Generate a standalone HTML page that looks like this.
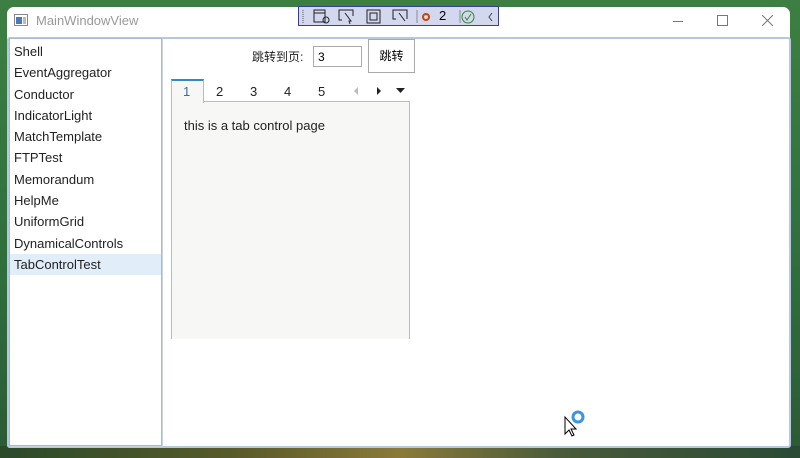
<!DOCTYPE html>
<html><head><style>
body{margin:0;width:800px;height:458px;overflow:hidden;background:linear-gradient(180deg,#3d7f42 0%,#2f6e3c 60%,#2c5a35 100%);font-family:"Liberation Sans","Noto Sans CJK SC",sans-serif;position:relative}
.bot{position:absolute;left:0;top:446px;width:800px;height:12px;background:linear-gradient(90deg,#2a4a2a,#5a5a2a 30%,#8a7a3a 50%,#4a5a3a 70%,#2a4a35)}
.win{position:absolute;left:7px;top:7px;width:783px;height:441px;background:#fff;border-radius:7px 7px 3px 3px}
.title{position:absolute;left:36px;top:13px;font-size:13px;color:#999}
.content{position:absolute;left:7px;top:37px;width:780px;height:407px;border:2px solid #b4c8e2;border-radius:3px;background:#fff}
.list{position:absolute;left:9px;top:38px;width:153px;border:1px solid #a9b9cf;box-shadow:1px 1px 0 #c8d4e4;padding-top:2px;box-sizing:border-box;height:408px}
.list div{height:21.3px;line-height:21px;font-size:13px;color:#222;padding-left:4px}
.sel{background:#e1eef9}
.tb{position:absolute;left:298px;top:6px;width:201px;height:20px;background:#d3d8ee;border:1px solid #3a3f8f;box-sizing:border-box}
.t{position:absolute;font-size:13px;color:#222}
</style></head><body>
<div class="bot"></div>
<div class="win"></div>
<svg style="position:absolute;left:14px;top:14px" width="14" height="13"><rect x="0.5" y="0.5" width="13" height="11" fill="#fff" stroke="#888"/><rect x="2" y="3" width="6" height="7" fill="#4a7abc"/><rect x="9" y="3" width="3" height="7" fill="#bbb"/></svg>
<div class="title">MainWindowView</div>
<div style="position:absolute;left:673px;top:21px;width:10px;height:1px;background:#777"></div>
<div style="position:absolute;left:717px;top:15px;width:9px;height:9px;border:1px solid #777"></div>
<svg style="position:absolute;left:762px;top:15px" width="11" height="11"><path d="M0 0L11 11M11 0L0 11" stroke="#777"/></svg>
<div class="tb">
<svg width="201" height="18" style="position:absolute;left:0;top:0" fill="none" stroke="#222">
<path d="M4 3v13" stroke="#555" stroke-dasharray="1 1"/>
<rect x="15" y="3" width="11" height="12"/><path d="M15 6h11"/><circle cx="27" cy="13" r="3"/>
<path d="M43 13h-3V3h14v6M46 6l6 8-2 0 1 3" /><rect x="68" y="3" width="13" height="13"/><rect x="71" y="6" width="7" height="7"/>
<path d="M97 12h-3V3h14v9M100 6l6 8"/><path d="M118 3v13M161 3v13" stroke="#889"/>
<circle cx="127" cy="10" r="3" stroke="#c40" stroke-width="2"/><circle cx="169" cy="10" r="6" stroke="#2a8a2a"/><path d="M166 10l2 3 4-6" stroke="#2a8a2a"/><path d="M193 6l-3 4 3 4" stroke="#444"/>
</svg>
<span style="position:absolute;left:140px;top:1px;font-size:13px">2</span>
</div>
<div class="content"></div>
<div class="list">
<div>Shell</div><div>EventAggregator</div><div>Conductor</div><div>IndicatorLight</div><div>MatchTemplate</div><div>FTPTest</div><div>Memorandum</div><div>HelpMe</div><div>UniformGrid</div><div>DynamicalControls</div><div class="sel">TabControlTest</div>
</div>
<div class="t" style="left:252px;top:48px;font-size:12px">跳转到页:</div>
<div style="position:absolute;left:313px;top:46px;border:1px solid #aaa;font-size:12px;line-height:20px;padding-left:4px;box-sizing:border-box;width:49px;height:21px">3</div>
<div style="position:absolute;left:368px;top:39px;width:47px;height:34px;border:1px solid #aaa;box-sizing:border-box;font-size:12px;text-align:center;line-height:32px">跳转</div>
<div style="position:absolute;left:171px;top:101px;width:239px;height:238px;background:#f7f7f5;border:1px solid #bbb;border-bottom:none;box-sizing:border-box"></div>
<div style="position:absolute;left:171px;top:79px;width:33px;height:24px;background:#f7f7f5;border:1px solid #bbb;border-top:2px solid #3a84c8;border-bottom:none;box-sizing:border-box"></div>
<div class="t" style="left:183px;top:84px;color:#3a6ea5">1</div>
<div class="t" style="left:216px;top:84px">2</div>
<div class="t" style="left:250px;top:84px">3</div>
<div class="t" style="left:284px;top:84px">4</div>
<div class="t" style="left:318px;top:84px">5</div>
<svg style="position:absolute;left:352px;top:85px" width="55" height="12"><path d="M6 2v8l-4-4z" fill="#bbb"/><path d="M25 2v8l4-4z" fill="#222"/><path d="M44 3h9l-4.5 5z" fill="#222"/></svg>
<div class="t" style="left:184px;top:118px">this is a tab control page</div>
<svg style="position:absolute;left:563px;top:409px" width="24" height="28"><path d="M2 8v17l4-4 3 6 2-1-3-6h5z" fill="#fff" stroke="#000"/><circle cx="15" cy="8" r="5" fill="none" stroke="#3a96e0" stroke-width="3"/></svg>
</body></html>
